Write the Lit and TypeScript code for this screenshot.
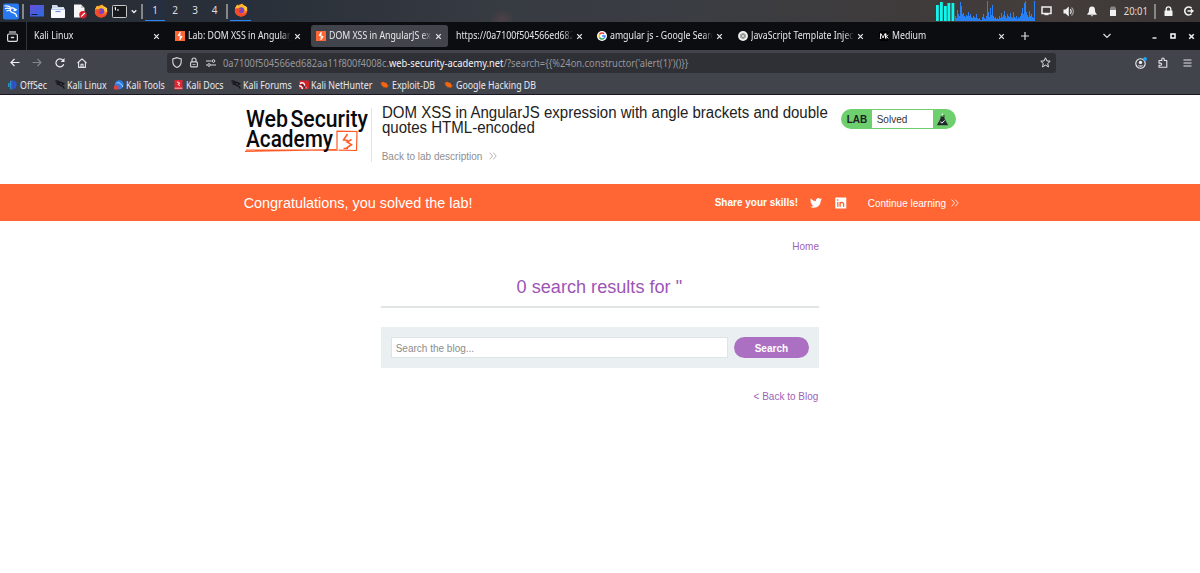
import { LitElement, html, svg, css } from "lit";
import { customElement } from "lit/decorators.js";

const firefox = () => html`<svg width="14" height="14" viewBox="0 0 14 14">
  <circle cx="7" cy="7.4" r="6.2" fill="#ff7a1f"/>
  <path d="M1 5.5C1.6 3.8 2.6 2.6 3 1.6c.6.8 1.300 1.300 2 1.500C6 2 7 1 8.400.5c0 1.200 1.300 2 2.300 3 1.500.6 2.600 2.200 2.600 4.200z" fill="#ffb92e"/>
  <circle cx="7.200" cy="7.300" r="3" fill="#7542c9"/>
  <path d="M.9 6.500c.4 5 3.700 7.100 6.600 7 3.500-.2 5.600-2.600 5.800-6-1 2.400-2.900 3.300-5 3-2-.2-3.400-1.400-3.600-3 1 .3 2-.1 2.500-.9-1.500-.2-2-1.400-3.500-1.300C2.300 5.300 1.400 5.700.9 6.500z" fill="#f5482d"/>
  <path d="M9 2.600c2.200 1.400 3 3.800 2.200 6 1.600-1 2.200-2.700 1.900-4C12.400 3.300 10 2.600 9 2.600z" fill="#ffd23d"/>
</svg>`;

const dragonPath = svg`<path d="M.5 1.500C3 1 5.500 1.400 7 3.200M1 4.200c2-.9 4.200-.5 5.600.6C7 3 9 2.800 10.500 4.400L13 5.500M6.600 4.800C5.600 7 7.500 8 9.500 8.300c2 .4 3 1.700 3.300 4M2.500 6.500C4 5.700 5.400 5.700 6.500 6.300M10.500 4.400 10 6l2-.2"/>`;

const dragonSmall = () => html`<svg width="10" height="10" viewBox="0 0 14 14" fill="none" stroke="#15161a" stroke-width="1.700">${dragonPath}</svg>`;

const burp = () => html`<svg width="10" height="10" viewBox="0 0 10 10"><rect width="10" height="10" fill="#ff6633"/><path d="M5.600.8 3 4.500h2.200L4.800 1.500M4.400 9.200 7.200 5.600H4.900l.4 2.800" fill="#fff" stroke="#fff" stroke-width=".9"/></svg>`;

const google = () => html`<svg width="10" height="10" viewBox="0 0 10 10"><circle cx="5" cy="5" r="5" fill="#fff"/><g fill="none" stroke-width="1.500"><path d="M2.500 3.500A3 3 0 0 1 7.100 2.900" stroke="#ea4335"/><path d="M2.500 3.500a3 3 0 0 0 0 3" stroke="#fbbc05"/><path d="M2.500 6.500A3 3 0 0 0 7 7.200" stroke="#34a853"/><path d="M7 7.200A3 3 0 0 0 8 5H5" stroke="#4285f4"/></g></svg>`;

const gpt = () => html`<svg width="10" height="10" viewBox="0 0 11 11"><circle cx="5.500" cy="5.500" r="5.400" fill="#eee"/><g fill="none" stroke="#777" stroke-width=".6"><ellipse cx="5.500" cy="5.500" rx="1.500" ry="3.200"/><ellipse cx="5.500" cy="5.500" rx="1.500" ry="3.200" transform="rotate(60 5.500 5.500)"/><ellipse cx="5.500" cy="5.500" rx="1.500" ry="3.200" transform="rotate(120 5.500 5.500)"/></g></svg>`;

const medium = () => html`<svg width="10" height="10" viewBox="0 0 10 10"><rect width="10" height="10" rx="1.500" fill="#000"/><path d="M1.500 2.500v5M2 2.500 4 7l2-4.500M.8 7.300h1.500M6.500 2.500v5M7 2.500v5M9.300 4 7.500 5.500l1.800 2" stroke="#fff" stroke-width=".9" fill="none"/></svg>`;

const cross = (w = 1.2) => html`<svg width="7" height="7" viewBox="0 0 7 7"><path d="m1.200 1.200 4.600 4.600m0-4.600L1.200 5.800" stroke="#e9e9ec" stroke-width=${w}/></svg>`;

const edb = () => html`<svg width="9" height="8" viewBox="0 0 9 8"><path d="M0 1.500 2 2l.5-1.500L4.500 1.600l1.800.2L7.500 4l1.400.8-1.300.8L7 7 5.500 6.300l-2 .3-.3-1.400L1.200 5l.8-1z" fill="#f4650f"/></svg>`;

const chevrons = (c: string) => html`<svg width="8" height="8" viewBox="0 0 8 8"><path d="m.6.600 3 3.400-3 3.400M4.200.6l3 3.400-3 3.400" fill="none" stroke=${c} stroke-width=".8"/></svg>`;

const TABS = [
  { title: "Kali Linux", icon: null },
  { title: "Lab: DOM XSS in AngularJ", icon: burp },
  { title: "DOM XSS in AngularJS exp", icon: burp, active: true },
  { title: "https://0a7100f504566ed682", icon: null },
  { title: "amgular js - Google Searc", icon: google },
  { title: "JavaScript Template Inject", icon: gpt },
  { title: "Medium", icon: medium },
];

const CPU = [4,2,10,6,4,18,14,6,7,4,3,5,4,8,4,6,3,2,4,3,2,6,2,1,2,0,0,3,6,2,1,4,19,8,3,12,5,15,4,2,3,1,2,1,4,2,7,3,5,9,4,2,6,4,3,7,3,2,8,3,2,4,1,3,2,4,7,12,6,17,19,8,5,3,9,4,6,3,2,19];

@customElement("desktop-panel")
class DesktopPanel extends LitElement {
  static styles = css`
    :host { display: grid; height: 22px; align-items: center; justify-items: center; color: #dcdde0;
      grid-template-columns: 21px 4px 23px 20px 23px 19px 19px 10px 6px 20px 20px 20px 19px 6px 21px 1fr 99px 23px 22px 23px 19px 28px 10px 16px 24px;
      font-size: 10px; line-height: 20px;
      background: radial-gradient(ellipse 13px 10px at 502px 19px, #4d4145, transparent), linear-gradient(90deg, #272c35, #2a3039 22%, #373b42 42%, #3a3d42 58%, #3f3b3b 76%, #443d3b 88%, #393535); }
    svg { display: block; }
    .sep { width: 1.300px; height: 15px; background: #85878b; }
    .ws { box-sizing: border-box; width: 100%; height: 21px; align-self: start; text-align: center; border-bottom: 1px solid transparent; }
    .on { background: #252f3f; border-bottom-color: #2d86f5; }
    .run { display: grid; place-items: center; }
    .time { font-size: 10.800px; transform: translateY(-.5px) scaleX(.87); color: #e6dccd; }
  `;
  render() {
    return html`
      <svg width="16" height="17" viewBox="0 0 16 17"><rect y=".5" width="16" height="16" rx="2" fill="#2878f0"/><g transform="translate(1 1.500)" fill="none" stroke="#fff" stroke-width="1.200">${dragonPath}</g></svg>
      <span class="sep"></span>
      <svg width="14" height="12" viewBox="0 0 14 12"><defs><linearGradient id="d" x2="1" y2="1"><stop stop-color="#6a50dc"/><stop offset="1" stop-color="#286cdc"/></linearGradient></defs><rect width="14" height="11.500" fill="url(#d)"/><path d="M1.500 9.500h6" stroke="#151a40"/></svg>
      <svg width="14" height="13" viewBox="0 0 14 13"><path d="M1 0h5l1.300 2H13v5H1z" fill="#cfd8e8"/><rect y="3.500" width="14" height="9.500" rx=".8" fill="#f7f9fd"/><path d="M0 4.500h14" stroke="#b6c9ec"/><path d="M4.500 6.500h5" stroke="#6f93d6" stroke-width="1.200"/></svg>
      <svg width="14" height="15" viewBox="0 0 14 15"><path d="M1 .5h7l3.500 3.500v9.500H1z" fill="#f5f5f5"/><path d="M8 .5V4h3.500z" fill="#c4c4c4"/><circle cx="10" cy="10.800" r="3.700" fill="#d81f2c"/><path d="m8.200 12.600 3.600-3.600" stroke="#fff" stroke-width="1.200"/></svg>
      ${firefox()}
      <svg width="15" height="13" viewBox="0 0 15 13"><rect x=".5" y=".5" width="14" height="12" rx=".8" fill="#17191c" stroke="#c5c7c9"/><path d="m2.500 3 1-.7v3M5 5h2" fill="none" stroke="#fff"/></svg>
      <svg width="6" height="5" viewBox="0 0 6 5"><path d="m.7 1.200 2.300 2.300 2.300-2.300" fill="none" stroke="#eee" stroke-width="1.300"/></svg>
      <span class="sep"></span>
      <span class="ws on">1</span><span class="ws">2</span><span class="ws">3</span><span class="ws">4</span>
      <span class="sep"></span>
      <span class="ws on run">${firefox()}</span>
      <span></span>
      <svg width="99" height="22" viewBox="0 0 99 22">
        ${[[0, 5], [4, 2], [8, 6], [11.5, 3], [15.5, 3]].map(([x, y]) => svg`<rect x=${x} y=${y} width="2.800" height=${21 - y} fill="#10f5ec"/>`)}
        ${CPU.map((v, i) => svg`<rect x=${19 + i} y=${20 - v} width="1" height=${v + 1} fill="#2880f5"/>`)}
      </svg>
      <svg width="11" height="10" viewBox="0 0 11 10"><path d="M1 1h9v6.500H1z" fill="none" stroke="#eee" stroke-width="1.500"/><path d="M3.500 8.500h4" stroke="#eee" stroke-width="1.400"/></svg>
      <svg width="12" height="11" viewBox="0 0 12 11"><path d="M.5 3.500h2L5.800.5v10L2.500 7.500h-2z" fill="#f1f1f1"/><path d="M7.200 3.300a3 3 0 0 1 0 4.400" fill="none" stroke="#eee" stroke-width="1.200"/><path d="M8.500 1.500c2.500 2 2.500 6 0 8" fill="none" stroke="#a5a3a3" stroke-width="1.200"/></svg>
      <svg width="10" height="11" viewBox="0 0 10 11"><path d="M5 .5c2.300 0 3 1.700 3 3.500 0 2 .6 3 1.700 4v.8H.3V8C1.400 7 2 6 2 4 2 2.200 2.700.5 5 .5zM3.700 9.300h2.600L5 10.600z" fill="#f1f1f1"/></svg>
      <svg width="8" height="10" viewBox="0 0 8 10"><path d="M2 .5h4v1h1V4H1V1.500h1z" fill="#898584"/><path d="M1 4h6v6H1z" fill="#f1f1f1"/></svg>
      <span class="time">20:01</span>
      <span class="sep"></span>
      <svg width="9" height="11" viewBox="0 0 9 11"><path d="M2.200 5V3.200a2.300 2.300 0 0 1 4.600 0V5" fill="none" stroke="#f1f1f1" stroke-width="1.400"/><rect x=".5" y="4.500" width="8" height="5.500" rx=".6" fill="#f1f1f1"/></svg>
      <svg width="11" height="10" viewBox="0 0 11 10"><path d="M8.600 2.200a4 4 0 1 0 0 5.600" fill="none" stroke="#f1f1f1" stroke-width="1.600"/><path d="M4.500 4.200h3.300V2.300L11 5 7.800 7.700V5.800H4.500z" fill="#f1f1f1"/></svg>
    `;
  }
}

@customElement("browser-tabs")
class BrowserTabs extends LitElement {
  static styles = css`
    :host { display: flex; height: 28px; background: #0c0d11; color: #e8e8eb; align-items: center; font-size: 10.200px; box-sizing: border-box; }
    svg { display: block; flex: none; }
    .view { box-sizing: border-box; width: 27px; height: 28px; border-right: 1px solid #33353b; display: grid; place-items: center; margin-right: 2px; padding-right: 2px; }
    .tab { box-sizing: border-box; width: 137.800px; height: 22px; padding: 0 6.500px 0 5px; margin-right: 3px; display: flex; align-items: center; gap: 3px; border-radius: 3px; flex: none; }
    .active { background: #42444c; }
    .title { flex: 1; min-width: 0; white-space: nowrap; overflow: hidden; line-height: 16px; -webkit-mask-image: linear-gradient(90deg, #000 calc(100% - 10px), transparent); mask-image: linear-gradient(90deg, #000 calc(100% - 10px), transparent); }
    .narrow { display: inline-block; transform: translateY(-.6px) scaleX(.86); transform-origin: 0 50%; }
    .tools { flex: 1; display: grid; grid-template-columns: 20px 1fr 10px 33px 18px 19px 18px; align-items: center; justify-items: center; }
  `;
  render() {
    return html`
      <div class="view"><svg width="11" height="11" viewBox="0 0 11 11"><path d="M2 1h7" stroke="#ddd" stroke-width="1.200"/><rect x=".6" y="3" width="9.800" height="7.400" rx="1.300" fill="none" stroke="#ddd" stroke-width="1.200"/><path d="M4 6h3v1H4z" fill="#ddd" stroke="#ddd" stroke-width=".5"/></svg></div>
      ${TABS.map(t => html`<div class="tab ${t.active ? "active" : ""}">${t.icon ? t.icon() : ""}<span class="title"><span class="narrow">${t.title}</span></span>${cross()}</div>`)}
      <div class="tools">
        <svg width="8" height="8" viewBox="0 0 8 8"><path d="M4 0v8M0 4h8" stroke="#ddd" stroke-width="1.200"/></svg>
        <span></span>
        <svg width="8" height="6" viewBox="0 0 8 6"><path d="m.5 1 3.500 3.500L7.500 1" fill="none" stroke="#ddd" stroke-width="1.200"/></svg>
        <span></span>
        <svg width="5" height="6" viewBox="0 0 5 6"><path d="M.5 5h4" stroke="#fff" stroke-width="1.300"/></svg>
        <svg width="6" height="6" viewBox="0 0 6 6"><rect x="1" y="1" width="4" height="4" fill="none" stroke="#fff" stroke-width="1.500"/></svg>
        ${cross(1.6)}
      </div>`;
  }
}

@customElement("browser-toolbar")
class BrowserToolbar extends LitElement {
  static styles = css`
    :host { display: block; background: #42444c; color: #e9e9ec; }
    svg { display: block; flex: none; }
    .nav { height: 25px; display: grid; grid-template-columns: 4px 22px 22px 23px 22px 74px 889px 74px 22px 22px 1fr; align-items: center; justify-items: center; }
    .field { box-sizing: border-box; width: 100%; height: 20px; border-radius: 3px; background: #2f3035; display: grid; grid-template-columns: 19px 16px 18px 1fr 19px; align-items: center; justify-items: center; padding-right: 1px; }
    .url { justify-self: start; margin-left: 3px; font-size: 10.200px; color: #96979c; white-space: nowrap; line-height: 18px; transform: translateY(-.5px) scaleX(.915); transform-origin: 0 50%; }
    .host { color: #f4f4f6; }
    .marks { height: 19px; display: flex; align-items: center; padding-left: 8px; font-size: 10.200px; border-bottom: 1px solid #1a1423; }
    .mark { display: grid; grid-template-columns: 12px auto; align-items: center; justify-content: start; white-space: nowrap; line-height: 18px; flex: none; }
    .narrow { transform: translateY(-.5px) scaleX(.865); transform-origin: 0 50%; }
    .w47 { width: 47px; } .w59 { width: 59px; } .w60 { width: 60px; } .w57 { width: 57px; } .w68 { width: 68px; } .w81 { width: 81px; } .w64 { width: 64px; } .w90 { width: 92px; }
  `;
  render() {
    const marks: [string, string, unknown][] = [
      ["OffSec", "w47", html`<svg width="9" height="10" viewBox="0 0 9 10"><path d="M.8 3v4M2.800.8v8.500" stroke="#2a9fe0" stroke-width="1.300"/><path d="M4.300.3v9.400" stroke="#3357c8" stroke-width="1"/><path d="M5.300.5c3 .5 3.500 3 3.300 5-.3 2-1.600 3-3.300 4z" fill="#2c56d0"/></svg>`],
      ["Kali Linux", "w59", dragonSmall()],
      ["Kali Tools", "w60", html`<svg width="10" height="10" viewBox="0 0 10 10"><circle cx="5.200" cy="4.800" r="4.500" fill="#2a7fe8"/><path d="M2.500 3.200C4 2.300 6 2.600 6.500 4.200 8 4.200 8.500 5.500 8.500 7" fill="none" stroke="#cfe2fb" stroke-width=".8"/><path d="M0 5.500h4.500v4H0z" fill="#df4148"/></svg>`],
      ["Kali Docs", "w57", html`<svg width="9" height="10" viewBox="0 0 9 10"><path d="M.5 0h8v9.500h-8z" fill="#e02430"/><path d="M.5 8.200h8" stroke="#f3dede" stroke-width=".8"/><path d="M3 2.200c2-.3 3 .6 2.500 1.700C4 3.300 3 4.500 5.800 5.600" stroke="#fff" stroke-width=".9" fill="none"/></svg>`],
      ["Kali Forums", "w68", dragonSmall()],
      ["Kali NetHunter", "w81", html`<svg width="10" height="10" viewBox="0 0 10 10"><rect y=".5" width="10" height="8.500" rx="1" fill="#d6202b"/><path d="M1 3.500C3 2 5 3 5.500 4.700c-1.500 1-.2 2.500 2 3.300M0 6c2-.4 3 .8 3.500 3" stroke="#fff" stroke-width="1.300" fill="none"/><path d="M2.500 4.500c2 .2 2 2 4 3.500" stroke="#1d1d22" stroke-width="1.100" fill="none"/></svg>`],
      ["Exploit-DB", "w64", edb()],
      ["Google Hacking DB", "w90", edb()],
    ];
    return html`
      <div class="nav">
        <span></span>
        <svg width="10" height="9" viewBox="0 0 10 9"><path d="M9.500 4.500H1M4.500 1 1 4.500 4.500 8" fill="none" stroke="#f0f0f2" stroke-width="1.200"/></svg>
        <svg width="10" height="9" viewBox="0 0 10 9"><path d="M.5 4.500H9M5.500 1 9 4.500 5.500 8" fill="none" stroke="#84868c" stroke-width="1.100"/></svg>
        <svg width="10" height="10" viewBox="0 0 10 10"><path d="M8.700 6.300A4 4 0 1 1 8 2.300" fill="none" stroke="#f0f0f2" stroke-width="1.200"/><path d="M9.500 0v4H5.700z" fill="#f0f0f2"/></svg>
        <svg width="10" height="10" viewBox="0 0 10 10"><path d="M.5 5 5 .8 9.500 5M1.600 4.200v5.200h6.800V4.200M4 9V6.200h2V9" fill="none" stroke="#e4e4e7" stroke-width="1.100" stroke-linejoin="round"/></svg>
        <span></span>
        <div class="field">
          <svg width="10" height="11" viewBox="0 0 10 11"><path d="M5 .7 9.200 2v2.500C9.200 7.500 7.500 9.500 5 10.400 2.500 9.500.8 7.500.8 4.500V2z" fill="none" stroke="#d8d8dc" stroke-width="1.100"/></svg>
          <svg width="8" height="11" viewBox="0 0 8 11"><path d="M2 5V3a2 2 0 0 1 4 0v2" fill="none" stroke="#d8d8dc" stroke-width="1.100"/><rect x=".6" y="4.900" width="6.800" height="5" rx="1" fill="none" stroke="#d8d8dc" stroke-width="1.100"/><path d="M2.500 7.500h3" stroke="#aaa"/></svg>
          <svg width="10" height="8" viewBox="0 0 10 8"><path d="M0 2h5.500M4.500 6H10M0 6h1" stroke="#d8d8dc" stroke-width="1.200"/><circle cx="7.500" cy="2" r="1.300" fill="none" stroke="#d8d8dc"/><circle cx="3" cy="6" r="1.300" fill="none" stroke="#d8d8dc"/></svg>
          <span class="url">0a7100f504566ed682aa11f800f4008c.<span class="host">web-security-academy.net</span>/?search={{%24on.constructor('alert(1)')()}}</span>
          <svg width="11" height="11" viewBox="0 0 11 11"><path d="m5.500.8 1.400 3.100 3.300.3-2.500 2.300.8 3.400-3-1.800-3 1.800.8-3.400L.8 4.200l3.300-.3z" fill="none" stroke="#e4e4e7" stroke-width="1" stroke-linejoin="round"/></svg>
        </div>
        <span></span>
        <svg width="12" height="12" viewBox="0 0 12 12"><circle cx="5.500" cy="6.500" r="4.700" fill="none" stroke="#f0f0f2" stroke-width="1.100"/><circle cx="5.500" cy="5.400" r="1.700" fill="#f0f0f2"/><path d="M2.700 8.500h5.600c-.8 1.500-4.800 1.500-5.600 0z" fill="#f0f0f2"/><circle cx="10" cy="2" r="1.900" fill="#18a6f5"/></svg>
        <svg width="10" height="11" viewBox="0 0 10 11"><path d="M1 3.500h2.800V2.200a1.200 1.200 0 0 1 2.400 0v1.300h2.600v6.700H1V8.300h1.500a1 1 0 0 0 0-2.200H1z" fill="none" stroke="#e4e4e7" stroke-width="1.100" stroke-linejoin="round"/></svg>
        <svg width="9" height="8" viewBox="0 0 9 8"><path d="M.5 1h8M.5 4h8M.5 7h8" stroke="#e4e4e7" stroke-width="1"/></svg>
      </div>
      <div class="marks">${marks.map(([t, w, i]) => html`<span class="mark ${w}">${i}<span class="narrow">${t}</span></span>`)}</div>`;
  }
}

@customElement("lab-page")
class LabPage extends LitElement {
  static styles = css`
    :host { display: block; background: #fff; color: #333; font-family: "Liberation Sans", Arial, sans-serif; font-size: 10.600px; line-height: 12px; flex: 1; }
    svg { display: block; flex: none; }
    a { color: inherit; text-decoration: none; }
    .n { display: inline-block; white-space: nowrap; transform: translate(-.3px, -.5px) scaleX(.944); transform-origin: 0 50%; }
    .head { width: 713px; height: 89px; margin-left: 244px; display: grid; grid-template-columns: 127px 470px 116px; align-items: start; }
    .logo { margin-top: 8px; }
    .info { margin-top: 13px; height: 54px; border-left: 1px solid #e3e3e3; padding-left: 10px; box-sizing: border-box; }
    h2 { margin: -3px 0 0; font-size: 15.600px; line-height: 15px; font-weight: 400; color: #222; white-space: nowrap; transform: translateY(-.4px) scaleX(.963); transform-origin: 0 50%; }
    .back { display: flex; align-items: center; margin-top: 15px; color: #8e8e8e; }
    .badge { box-sizing: border-box; width: 115px; height: 20px; margin-top: 14px; display: grid; grid-template-columns: 31px 1fr 23px; background: #6dcf6d; border-radius: 10px; align-items: center; line-height: 20px; }
    .lab { font-weight: 700; padding-left: 5.500px; color: #222; }
    .state { background: #fff; height: 18px; line-height: 18px; padding-left: 4.500px; }
    .flask { justify-self: start; margin-left: 3px; }
    .banner { height: 37px; background: #ff6633; color: #fff; padding-left: 244px; display: grid; grid-template-columns: 470.500px 95.500px 24.500px 33px auto; align-items: center; }
    .congrats { font-size: 15.300px; line-height: 18px; }
    .congrats .n { transform: translate(-.3px, -.5px) scaleX(.941); }
    .share { font-weight: 700; padding-bottom: 1px; }
    .more { display: flex; align-items: center; padding-top: 1px; }
    .blog { width: 438px; margin-left: 381px; padding-top: 19px; color: #a05fb8; }
    .right { text-align: right; }
    .right .n { transform-origin: 100% 50%; }
    h1 { font-size: 19.200px; line-height: 22px; font-weight: 400; text-align: center; margin: 24px 0 8px; color: #9c55b5; }
    h1 .n, .button .n { transform-origin: 50% 50%; }
    .rule { height: 1.500px; background: #e1e4e4; }
    .search { box-sizing: border-box; height: 41px; margin: 19px 0 22px; background: #eaeff1; display: grid; grid-template-columns: 337px 75px; gap: 6px; padding: 10px; }
    .input { box-sizing: border-box; border: 1px solid #dfe4e6; background: #fff; height: 21px; line-height: 20px; padding-left: 4px; color: #8c8c8c; }
    .button { height: 21px; line-height: 22px; border-radius: 11px; background: #ac70c2; color: #fff; font-weight: 700; text-align: center; }
  `;
  render() {
    return html`
      <div class="head">
        <svg class="logo" width="126" height="54" viewBox="244 103 126 54">
          <path d="M245 151.300 336 149.600M246 150l91 .2v-19l20 .3-.5 19-18-.4" fill="none" stroke="#ff5a26" stroke-width="1.200"/>
          <path d="m347.500 134-4 6 4.500.5M351.500 139.500l-4.500 2.500 4.500 2.700-5 3.300M343.500 148.500h4.500" fill="none" stroke="#ff5a26" stroke-width="1.500"/>
          <g fill="#0a0a0a" font-family="Roboto, sans-serif" font-weight="500" font-size="23.500">
            <text x="246" y="126.600" textLength="42" lengthAdjust="spacingAndGlyphs">Web</text>
            <text x="290.500" y="126.600" textLength="77.500" lengthAdjust="spacingAndGlyphs">Security</text>
            <text x="246" y="146.700" textLength="87" lengthAdjust="spacingAndGlyphs">Academy</text>
          </g>
        </svg>
        <div class="info">
          <h2>DOM XSS in AngularJS expression with angle brackets and double<br>quotes HTML-encoded</h2>
          <a class="back"><span class="n">Back to lab description</span>${chevrons("#a0a0a0")}</a>
        </div>
        <div class="badge">
          <span class="lab"><span class="n">LAB</span></span><span class="state"><span class="n">Solved</span></span>
          <svg class="flask" width="13" height="13" viewBox="0 0 13 13"><path d="M4.500 3.500h4v2l3.600 6.800H.9l3.600-6.800z" fill="#23282c"/><path d="m4.300 8.500 1.500 1.600L8.700 7.500" fill="none" stroke="#fff" stroke-width="1"/><circle cx="6.500" cy="1.200" r=".8" fill="#fff"/><circle cx="8" cy="2.400" r=".6" fill="#23282c"/></svg>
        </div>
      </div>
      <div class="banner">
        <span class="congrats"><span class="n">Congratulations, you solved the lab!</span></span>
        <span class="share"><span class="n">Share your skills!</span></span>
        <svg width="12" height="12" viewBox="0 0 24 24"><path d="M24 4.600a10 10 0 0 1-2.800.8 5 5 0 0 0 2.100-2.700 10 10 0 0 1-3.100 1.200 4.900 4.900 0 0 0-8.400 4.500A14 14 0 0 1 1.700 3.100a4.900 4.900 0 0 0 1.500 6.600 5 5 0 0 1-2.200-.6 4.900 4.900 0 0 0 3.900 4.900 5 5 0 0 1-2.200.1 4.900 4.900 0 0 0 4.600 3.400A10 10 0 0 1 0 19.500 14 14 0 0 0 7.500 21.700c9.200 0 14.300-7.700 14-14.600A10 10 0 0 0 24 4.600z" fill="#fff"/></svg>
        <svg width="12" height="12" viewBox="0 0 12 12"><rect x=".3" y=".5" width="11" height="11" rx=".6" fill="#fff"/><path d="M2.800 5v4.700M2.800 2.300v1.500M5.100 9.700V5M5.300 6.300c.8-1.200 3.300-1.200 3.300.7v2.700" fill="none" stroke="#ff6633" stroke-width="1.300"/></svg>
        <a class="more"><span class="n">Continue learning</span>${chevrons("#fff")}</a>
      </div>
      <div class="blog">
        <div class="right"><a class="n">Home</a></div>
        <h1><span class="n">0 search results for "</span></h1>
        <div class="rule"></div>
        <div class="search"><div class="input"><span class="n">Search the blog...</span></div><div class="button"><span class="n">Search</span></div></div>
        <div class="right"><a class="n">&lt; Back to Blog</a></div>
      </div>`;
  }
}

@customElement("app-root")
class AppRoot extends LitElement {
  static styles = css`
    :host { display: flex; flex-direction: column; width: 1200px; height: 573px; overflow: hidden; background: #fff; font-family: "Noto Sans", sans-serif; }
  `;
  render() {
    return html`<desktop-panel></desktop-panel><browser-tabs></browser-tabs><browser-toolbar></browser-toolbar><lab-page></lab-page>`;
  }
}
